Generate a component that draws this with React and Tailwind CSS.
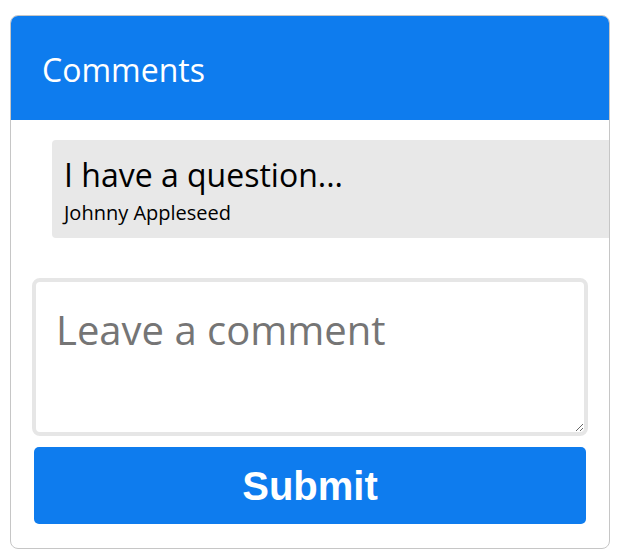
import React from "react";

export default function App() {
  return (
    <div className="pl-[10px] pt-[15px] bg-white" style={{ fontFamily: "'Open Sans', 'Noto Sans', sans-serif" }}>
      <div className="w-[600px] h-[534px] border border-[#c6c6c6] rounded-[8px] overflow-hidden flex flex-col">
        <div className="h-[104px] bg-[#0e7cee] flex items-center pl-[31px] pt-[4px]">
          <h2 className="text-[32px] text-white leading-none">Comments</h2>
        </div>

        <div className="mt-[20px] ml-[41px] h-[98px] bg-[#e8e8e8] rounded-l-[4px] pl-[12px] pt-[13px] flex flex-col">
          <p className="text-[32px] leading-[44px] text-black">I have a question...</p>
          <p className="text-[20px] leading-[28px] mt-[2px] text-black">Johnny Appleseed</p>
        </div>

        <div className="px-[21px] mt-[40px] flex flex-col">
          <textarea
            placeholder="Leave a comment"
            className="h-[158px] w-full border-4 border-[#e6e6e6] rounded-[8px] px-[20px] pt-[21px] pb-[10px] text-[40px] leading-[54px] placeholder:text-[#757575] outline-none"
            style={{ fontFamily: "'Open Sans', 'Noto Sans', sans-serif" }}
          />
          <button
            className="mt-[11px] mx-[2px] h-[77px] bg-[#0e7cee] rounded-[5px] text-white font-bold text-[40px]"
            style={{ fontFamily: "'Liberation Sans', Arial, sans-serif" }}
          >
            Submit
          </button>
        </div>
      </div>
    </div>
  );
}
